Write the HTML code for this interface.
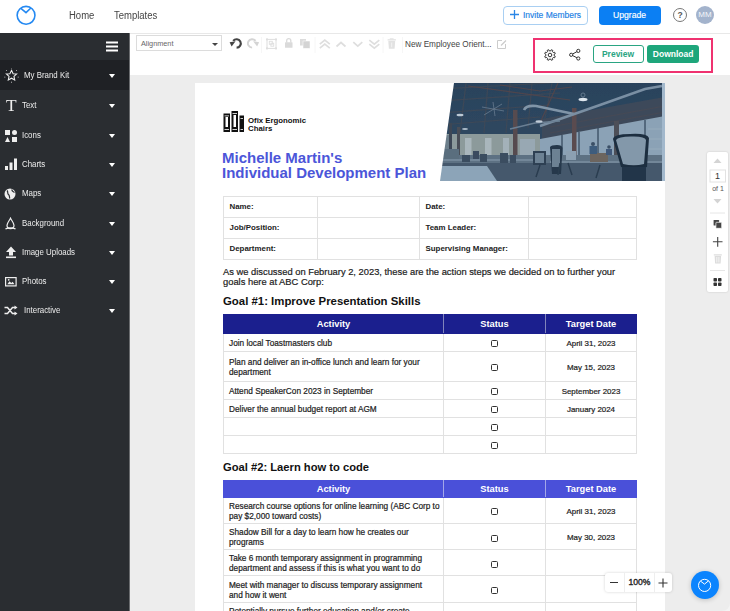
<!DOCTYPE html>
<html><head><meta charset="utf-8">
<style>
*{box-sizing:border-box}
html,body{margin:0;padding:0}
body{width:730px;height:611px;overflow:hidden;position:relative;background:#f4f4f4;font-family:"Liberation Sans",sans-serif;color:#222}
.a{position:absolute;white-space:nowrap}
#hdr{position:absolute;left:0;top:0;width:730px;height:33px;background:#fff}
#sb{position:absolute;left:0;top:33px;width:130px;height:578px;background:#2a2d31;border-right:1px solid #6a6c6f}
#tb{position:absolute;left:130px;top:33px;width:600px;height:42px;background:#fff;border-top:1px solid #e8e8e8}
#cv{position:absolute;left:130px;top:75px;width:600px;height:536px;background:#ededed;border-bottom-right-radius:8px}
#pg{position:absolute;left:195px;top:83px;width:470px;height:540px;background:#fff}
.sbi{position:absolute;left:0;width:129px;height:29px;color:#ededed;font-size:8.4px}
.sbi .t{position:absolute;left:22px;top:0;line-height:29px;transform:scaleX(.94);transform-origin:0 0}
.sbi .c{position:absolute;left:109px;top:13px;width:0;height:0;border-left:3.5px solid transparent;border-right:3.5px solid transparent;border-top:4px solid #fff}
.sbi svg{position:absolute}
table{border-collapse:collapse;table-layout:fixed;position:absolute;font-family:"Liberation Sans",sans-serif}
td,th{border:1px solid #e1e1e1;padding:0}
.it td{font-size:7.9px;font-weight:700;color:#222;height:21px;padding:0 0 1.5px 5.5px}
.gt th{color:#fff;font-size:9.3px;font-weight:700;height:19px;border-color:var(--hc);border-right-color:#8084bb}
.gt th:last-child{border-right-color:var(--hc)}
.g2 th{border-right-color:#a3a6e8}
.gt td{font-size:8.25px;color:#222;padding:2px 5px 0 5px;-webkit-text-stroke:0.2px #222;line-height:10px;white-space:nowrap}
.g2 td{padding-top:3.5px}
.gt td[align=center]{font-size:7.95px;-webkit-text-stroke:0.2px #222}
.cb{display:inline-block;width:7px;height:7px;border:1px solid #333;border-radius:1.5px;vertical-align:middle}
</style></head>
<body>
<!-- HEADER -->
<div id="hdr">
  <svg class="a" style="left:15px;top:5px" width="22" height="22" viewBox="0 0 22 22">
    <circle cx="11.05" cy="10.3" r="8.9" fill="none" stroke="#2489f2" stroke-width="1.6"/>
    <path d="M5.6 3.2L11 7.6L15.9 3.0" fill="none" stroke="#2489f2" stroke-width="1.6"/>
  </svg>
  <div class="a" style="left:69px;top:9.5px;font-size:10px;color:#444;line-height:12px;transform:scaleX(.95);transform-origin:0 0">Home</div>
  <div class="a" style="left:113.5px;top:9.5px;font-size:10px;color:#444;line-height:12px;transform:scaleX(.95);transform-origin:0 0">Templates</div>
  <div class="a" style="left:503px;top:6px;width:85px;height:19px;border:1px solid #a9cff2;border-radius:4px"></div>
  <svg class="a" style="left:509px;top:9px" width="11" height="11"><path d="M5.5 1V10M1 5.5H10" stroke="#2a86e6" stroke-width="1.3"/></svg>
  <div class="a" style="left:523px;top:9px;font-size:8.5px;color:#2280e4;line-height:12px;-webkit-text-stroke:0.15px #2280e4">Invite Members</div>
  <div class="a" style="left:599px;top:6px;width:62px;height:19px;background:#0b7ff3;border-radius:4px"></div>
  <div class="a" style="left:613px;top:9px;font-size:8.6px;color:#fff;line-height:12px;-webkit-text-stroke:0.15px #fff">Upgrade</div>
  <div class="a" style="left:673px;top:8.3px;width:14px;height:14px;border:1px solid #777;border-radius:50%;font-size:8.5px;font-weight:700;text-align:center;line-height:12px;color:#555">?</div>
  <div class="a" style="left:696px;top:6px;width:18px;height:18px;background:#a3b3cc;border-radius:50%;font-size:8px;text-align:center;line-height:18px;color:#f4f6fa">MM</div>
</div>

<!-- SIDEBAR -->
<div id="sb">
  <svg class="a" style="left:106px;top:8px" width="12" height="11"><rect x="0" y="0.5" width="12" height="2" fill="#fff"/><rect x="0" y="4.5" width="12" height="2" fill="#fff"/><rect x="0" y="8.5" width="12" height="2" fill="#fff"/></svg>
  <div class="sbi" style="top:27px;height:30px;background:#1f2125">
    <svg style="left:4px;top:8px" width="15" height="15" viewBox="0 0 14 14"><path d="M7 2.2 L8.5 5.3 L11.8 5.6 L9.3 7.9 L10 11.2 L7 9.5 L4 11.2 L4.7 7.9 L2.2 5.6 L5.5 5.3 Z" fill="none" stroke="#eee" stroke-width="1"/><circle cx="2.3" cy="2.3" r="0.5" fill="#bbb"/><circle cx="11.7" cy="2.3" r="0.5" fill="#bbb"/><circle cx="0.8" cy="8.5" r="0.5" fill="#bbb"/><circle cx="13.2" cy="8.5" r="0.5" fill="#bbb"/><circle cx="7" cy="13.2" r="0.5" fill="#bbb"/><circle cx="7" cy="0.6" r="0.4" fill="#bbb"/></svg>
    <div class="t" style="left:24px;line-height:30px">My Brand Kit</div><div class="c" style="top:14px"></div>
  </div>
  <div class="sbi" style="top:58px">
    <div class="a" style="left:5.5px;top:5.5px;font-family:'Liberation Serif';font-size:16.5px;color:#eee;line-height:17px;transform:scaleX(1.05);transform-origin:0 0">T</div>
    <div class="t">Text</div><div class="c"></div>
  </div>
  <div class="sbi" style="top:88px">
    <svg style="left:5px;top:9px" width="12" height="12"><rect x="0" y="0" width="5" height="5" fill="#eee"/><circle cx="9.5" cy="2.5" r="2.5" fill="#eee"/><path d="M0 12L2.5 7L5 12Z" fill="#eee"/><rect x="7" y="7" width="5" height="5" fill="#eee"/></svg>
    <div class="t">Icons</div><div class="c"></div>
  </div>
  <div class="sbi" style="top:117px">
    <svg style="left:5px;top:8px" width="12" height="12"><rect x="0" y="8" width="3" height="4" fill="#eee"/><rect x="4.5" y="4.5" width="3" height="7.5" fill="#eee"/><rect x="9" y="0.5" width="3" height="11.5" fill="#eee"/></svg>
    <div class="t">Charts</div><div class="c"></div>
  </div>
  <div class="sbi" style="top:146px">
    <svg style="left:4px;top:9px" width="12" height="12"><circle cx="6" cy="6" r="5.5" fill="#eee"/><path d="M3 2.5C4.5 4 3 5.5 4.5 6.5C6 7.5 5 9.5 6 10.5M8 1.5C7.5 3 9.5 4 10.5 4.5" stroke="#2a2d31" stroke-width="1.2" fill="none"/></svg>
    <div class="t">Maps</div><div class="c"></div>
  </div>
  <div class="sbi" style="top:176px">
    <svg style="left:4px;top:8px" width="13" height="14"><path d="M6.5 1.2C5.5 3.5 3 5.8 3 8.3A3.5 3.3 0 0 0 10 8.3C10 5.8 7.5 3.5 6.5 1.2Z" fill="none" stroke="#eee" stroke-width="1.2"/><path d="M1.5 11.8Q6.5 9.8 11.5 11.8" fill="none" stroke="#eee" stroke-width="1.3"/></svg>
    <div class="t">Background</div><div class="c"></div>
  </div>
  <div class="sbi" style="top:205px">
    <svg style="left:5px;top:8px" width="12" height="13"><path d="M6 0.5L11 6H8V9.5H4V6H1Z" fill="#eee"/><rect x="1" y="10.5" width="10" height="1.6" fill="#eee"/></svg>
    <div class="t">Image Uploads</div><div class="c"></div>
  </div>
  <div class="sbi" style="top:234px">
    <svg style="left:5px;top:10px" width="13" height="11"><rect x="0.6" y="0.6" width="10.5" height="8.3" fill="none" stroke="#eee" stroke-width="1.2"/><path d="M2.3 7.3L4.5 4.2L6.3 6L7.6 4.7L9.5 7.3Z" fill="#eee"/><circle cx="3.7" cy="2.8" r="0.9" fill="#eee"/></svg>
    <div class="t">Photos</div><div class="c"></div>
  </div>
  <div class="sbi" style="top:263px">
    <svg style="left:4px;top:9px" width="14" height="11"><path d="M0.5 2.5H3.5L8.5 8.5H11M0.5 8.5H3.5L8.5 2.5H11" stroke="#eee" stroke-width="1.5" fill="none"/><path d="M10.5 0.5L13.5 2.5L10.5 4.5ZM10.5 6.5L13.5 8.5L10.5 10.5Z" fill="#eee"/></svg>
    <div class="t" style="left:24px">Interactive</div><div class="c"></div>
  </div>
</div>

<!-- TOOLBAR -->
<div id="tb">
  <div class="a" style="left:5.5px;top:1px;width:86.5px;height:16px;border:1px solid #dcdcdc;background:#fff"></div>
  <div class="a" style="left:11px;top:5px;font-size:7.3px;color:#666;line-height:10px">Alignment</div>
  <div class="a" style="left:82px;top:9px;width:0;height:0;border-left:3px solid transparent;border-right:3px solid transparent;border-top:3.5px solid #444"></div>
  <svg class="a" style="left:0;top:0" width="400" height="22">
    <!-- undo -->
    <path d="M106.6 13.6A4.2 4.2 0 1 0 103.2 6.9" fill="none" stroke="#444" stroke-width="2.1"/>
    <path d="M99.6 8.3L105.6 7.2L101.6 12.4Z" fill="#444"/>
    <!-- redo -->
    <path d="M122.1 13.6A4.2 4.2 0 1 1 125.5 6.9" fill="none" stroke="#d4d4d4" stroke-width="1.9"/>
    <path d="M129.1 8.3L123.1 7.2L127.1 12.4Z" fill="#d4d4d4"/>
    <line x1="131.5" y1="3" x2="131.5" y2="19" stroke="#f6f6f6"/>
    <!-- group -->
    <rect x="137" y="5.4" width="9" height="9" fill="none" stroke="#dedede" stroke-width="1"/>
    <rect x="136" y="4.4" width="2" height="2" fill="#dedede"/><rect x="145" y="4.4" width="2" height="2" fill="#dedede"/>
    <rect x="136" y="13.4" width="2" height="2" fill="#dedede"/><rect x="145" y="13.4" width="2" height="2" fill="#dedede"/>
    <rect x="139.3" y="7.3" width="3" height="3" fill="none" stroke="#dedede" stroke-width="0.9"/>
    <rect x="140.9" y="9.2" width="2.8" height="3" fill="none" stroke="#dedede" stroke-width="0.9"/>
    <!-- lock -->
    <rect x="155" y="8.2" width="7.5" height="5.6" rx="0.5" fill="#dadada"/>
    <path d="M156.7 8.4V6.6A2.05 2.05 0 0 1 160.8 6.6V8.4" fill="none" stroke="#dadada" stroke-width="1.3"/>
    <!-- duplicate -->
    <rect x="170" y="5" width="6" height="6.5" fill="#dcdcdc"/>
    <rect x="173" y="7" width="7" height="7.4" fill="#d4d4d4" stroke="#fff" stroke-width="0.5"/>
    <line x1="185" y1="3" x2="185" y2="19" stroke="#f6f6f6"/>
    <!-- double up -->
    <path d="M189.8 10.2L194.8 6.2L199.8 10.2M189.8 14.2L194.8 10.2L199.8 14.2" fill="none" stroke="#dedede" stroke-width="1.7"/>
    <path d="M206.5 12.5L211 8.5L215.5 12.5" fill="none" stroke="#dedede" stroke-width="1.7"/>
    <path d="M223.3 8.2L227.8 12.2L232.3 8.2" fill="none" stroke="#dedede" stroke-width="1.7"/>
    <path d="M239.3 6.2L244.3 10.2L249.3 6.2M239.3 10.2L244.3 14.2L249.3 10.2" fill="none" stroke="#dedede" stroke-width="1.7"/>
    <line x1="253" y1="3" x2="253" y2="19" stroke="#f6f6f6"/>
    <path d="M258.3 7H265.2L264.6 14.8H258.9Z" fill="#e2e2e2"/>
    <rect x="257.6" y="5.2" width="8.3" height="1.3" fill="#e2e2e2"/>
    <rect x="259.8" y="4.3" width="3.8" height="1" fill="#e2e2e2"/>
    <line x1="261.7" y1="8.5" x2="261.7" y2="13.3" stroke="#f6f6f6" stroke-width="0.8"/>
    <line x1="272.5" y1="3" x2="272.5" y2="19" stroke="#f6f6f6"/>
  </svg>
  <div class="a" style="left:275px;top:5px;font-size:8.2px;color:#444;line-height:11px">New Employee Orient...</div>
  <svg class="a" style="left:366px;top:4px" width="12" height="12"><path d="M1.5 2.5H6M1.5 2.5V10.5H9.5V6" fill="none" stroke="#ccc" stroke-width="1"/><path d="M5 7.5L10 2.5" stroke="#ccc" stroke-width="1.3"/></svg>
  <!-- pink box -->
  <div class="a" style="left:403px;top:4px;width:180px;height:35px;border:2px solid #ef3270"></div>
  <svg class="a" style="left:413px;top:14px" width="14" height="14" viewBox="0 0 14 14">
    <path d="M12.25 8.26 L11.60 9.82 L10.28 9.46 L9.46 10.28 L9.82 11.60 L8.26 12.25 L7.58 11.06 L6.42 11.06 L5.74 12.25 L4.18 11.60 L4.54 10.28 L3.72 9.46 L2.40 9.82 L1.75 8.26 L2.94 7.58 L2.94 6.42 L1.75 5.74 L2.40 4.18 L3.72 4.54 L4.54 3.72 L4.18 2.40 L5.74 1.75 L6.42 2.94 L7.58 2.94 L8.26 1.75 L9.82 2.40 L9.46 3.72 L10.28 4.54 L11.60 4.18 L12.25 5.74 L11.06 6.42 L11.06 7.58Z" fill="none" stroke="#333" stroke-width="1" stroke-linejoin="round"/>
    <circle cx="7" cy="7" r="1.8" fill="none" stroke="#333" stroke-width="1"/>
  </svg>
  <svg class="a" style="left:438px;top:14px" width="14" height="14" viewBox="0 0 14 14">
    <circle cx="3.2" cy="6.8" r="1.6" fill="none" stroke="#333" stroke-width="1"/>
    <circle cx="10.3" cy="2.9" r="1.6" fill="none" stroke="#333" stroke-width="1"/>
    <circle cx="10.3" cy="10.5" r="1.6" fill="none" stroke="#333" stroke-width="1"/>
    <path d="M4.6 6L8.9 3.7M4.6 7.6L8.9 9.7" stroke="#333" stroke-width="1"/>
  </svg>
  <div class="a" style="left:462.5px;top:11.2px;width:51px;height:18.3px;border:1px solid #2aa582;border-radius:3px;font-size:8.5px;font-weight:700;color:#2aa582;text-align:center;line-height:16px">Preview</div>
  <div class="a" style="left:517.3px;top:11.2px;width:51.7px;height:18.3px;background:#1ea67b;border-radius:3px;font-size:8.5px;font-weight:700;color:#fff;text-align:center;line-height:18.3px">Download</div>
</div>

<!-- CANVAS -->
<div id="cv"></div>
<div id="pg">
  <!-- photo -->
  <svg class="a" style="left:245px;top:0" width="225" height="98" viewBox="0 0 225 98">
    <defs>
      <clipPath id="cp"><path d="M14 0H225V98H0Z"/></clipPath>
      <filter id="bl" x="-5%" y="-5%" width="110%" height="110%"><feGaussianBlur stdDeviation="0.75"/></filter>
      <linearGradient id="ceil" x1="0" y1="0" x2="0" y2="1">
        <stop offset="0" stop-color="#2a435c"/><stop offset="1" stop-color="#324a63"/>
      </linearGradient>
    </defs>
    <g clip-path="url(#cp)"><g filter="url(#bl)">
      <rect x="0" y="0" width="225" height="98" fill="url(#ceil)"/>
      <!-- rafters -->
      <path d="M0 6L110 0M0 18L120 10M0 30L110 22M0 42L100 34M26 0L20 50M48 0L44 50M70 0L66 50M92 0L88 45M112 0L104 40" stroke="#414856" stroke-width="1.2" fill="none" opacity="0.8"/>
      <path d="M28 3L130 17M60 2L100 8L132 4M118 0L100 40" stroke="#5b4548" stroke-width="1.2" fill="none" opacity="0.75"/>
      <!-- wooden band right -->
      <path d="M102 36L225 14V34L102 56Z" fill="#3e4a5a"/>
      <path d="M110 44L225 23M110 50L225 29" stroke="#4a4a55" stroke-width="1" opacity="0.7"/>
      <!-- back wall left -->
      <path d="M0 51H100V76H0Z" fill="#8c9a9b"/>
      <rect x="25" y="55" width="6.5" height="17" fill="#a9b6bc"/>
      <rect x="45" y="55" width="6.5" height="17" fill="#a9b6bc"/>
      <rect x="63" y="55" width="6" height="17" fill="#a3b1b9"/>
      <rect x="80" y="56" width="15" height="16" fill="#98a8b3"/>
      <rect x="0" y="52" width="10" height="22" fill="#6d7f8b"/>
      <!-- right windows -->
      <path d="M100 56L225 33V76H100Z" fill="#8ba2b6"/>
      <path d="M122 52V76M139 49V76M158 45V76M177 42V76M205 37V76" stroke="#3d5266" stroke-width="1.4"/>
      <path d="M208 46H225M206 56H225M206 66H225M180 60H203" stroke="#a3b5c5" stroke-width="0.6"/>
      <!-- pillars -->
      <rect x="9" y="40" width="3" height="36" fill="#3d4754"/>
      <rect x="17" y="44" width="3" height="32" fill="#4a4e57"/>
      <rect x="73" y="27" width="4.5" height="52" fill="#574b50"/>
      <rect x="132" y="25" width="4.5" height="54" fill="#5a4c50"/>
      <rect x="174" y="38" width="5" height="40" fill="#4d5058"/>
      <!-- ducts -->
      <path d="M84 27Q86 22 96 23L134 31" stroke="#8095a8" stroke-width="2.6" fill="none"/>
      <path d="M100 43L160 22L205 6L222 3" stroke="#7a8fa3" stroke-width="2.6" fill="none"/>
      <path d="M70 46L95 40L120 38" stroke="#6a7f93" stroke-width="1.6" fill="none"/>
      <ellipse cx="20" cy="32" rx="3.5" ry="1.3" fill="#bccad6"/>
      <ellipse cx="25" cy="46" rx="3" ry="1.1" fill="#aebdca"/>
      <ellipse cx="99" cy="38.5" rx="3.5" ry="1.2" fill="#c0ccd8"/>
      <ellipse cx="143" cy="16.5" rx="4.5" ry="1.7" fill="#dde6ee"/>
      <circle cx="143" cy="12" r="2" fill="none" stroke="#6f8498" stroke-width="0.8"/>
      <path d="M42 24L64 28M53 19L55 33M44 32L62 21" stroke="#6e8396" stroke-width="0.7"/>
      <!-- desks -->
      <rect x="0" y="72" width="225" height="8" fill="#5d7183"/>
      <path d="M0 77H100M110 79H225" stroke="#8a9eaf" stroke-width="1.2"/>
      <rect x="0" y="80" width="225" height="18" fill="#45596c"/>
      <!-- monitors / chairs -->
      <rect x="3" y="66" width="16" height="10" fill="#5a6e7e"/>
      <rect x="33" y="68" width="6" height="8" fill="#3a4c5f"/>
      <path d="M93 68H106V82H93Z" fill="#2d3f52"/>
      <path d="M95 70H104V80H95Z" fill="#6d8294"/>
      <path d="M110 64Q111 62 117 62Q122 62 122.5 65L121 91H112Z" fill="#25384b"/>
      <path d="M112 66H120V84H112Z" fill="#6c8193"/>
      <rect x="126" y="68" width="10" height="9" fill="#8ca0b2"/>
      <rect x="150" y="70" width="18" height="9" fill="#6c655e"/>
      <circle cx="153" cy="61" r="2" fill="#3a4f66"/>
      <rect x="149.5" y="63" width="7.5" height="8" fill="#3e5b7d"/>
      <circle cx="169" cy="64" r="1.8" fill="#3a4f66"/>
      <rect x="166" y="66" width="6" height="6" fill="#40597a"/>
      <path d="M60 70h8v10h-8zM70 72h6v8h-6zM40 71h7v8h-7zM22 72h8v7h-8z" fill="#3a4d60"/>
      <path d="M128 80L132 92M120 80L118 92M160 82L156 95M100 82L96 94" stroke="#2b3d50" stroke-width="1.5"/>
      <!-- table top -->
      <path d="M0 83H47L57 98H0Z" fill="#8ca4b8"/>
      <!-- chair -->
      <path d="M173 56Q174 51 190 51Q207 50 209 55L207 84Q195 87 181 84Z" fill="#1d2e40"/>
      <path d="M176 57Q178 53.5 191 53.5Q205 53 206 57L204 81Q194 83.5 183 81Z" fill="#8398aa"/>
      <path d="M182 84H206V98H182Z" fill="#24364a"/>
    </g><rect x="222" y="0" width="3" height="98" fill="#a2b8cc"/>
    </g>
  </svg>
  <!-- logo -->
  <svg class="a" style="left:28px;top:28px" width="24" height="22" viewBox="0 0 24 22">
    <rect x="0.5" y="2.5" width="6.5" height="18.5" fill="#111"/>
    <rect x="2.5" y="6" width="2.5" height="10" fill="#fff"/>
    <rect x="1.5" y="4.5" width="4.5" height="0.8" fill="#fff"/>
    <rect x="1.5" y="18" width="4.5" height="0.8" fill="#fff"/>
    <rect x="8.5" y="0" width="6.5" height="21" fill="#111"/>
    <rect x="10.5" y="4" width="2.5" height="12" fill="#fff"/>
    <rect x="9.5" y="2" width="4.5" height="0.8" fill="#fff"/>
    <rect x="9.5" y="18" width="4.5" height="0.8" fill="#fff"/>
    <rect x="16.5" y="4.5" width="4.5" height="16.5" fill="#111"/>
    <rect x="17.5" y="7" width="2.5" height="0.8" fill="#fff"/>
    <rect x="17.5" y="18" width="2.5" height="0.8" fill="#fff"/>
  </svg>
  <div class="a" style="left:53px;top:34px;font-size:7.8px;font-weight:700;line-height:8px;color:#111">Ofix Ergonomic<br>Chairs</div>
  <div class="a" style="left:27px;top:67px;font-size:15px;font-weight:700;line-height:15px;color:#4b56d9">Michelle Martin's<br>Individual Development Plan</div>

  <table class="it" style="left:28px;top:113px;width:414px">
    <tr><td style="width:94px">Name:</td><td style="width:102px"></td><td style="width:109px">Date:</td><td></td></tr>
    <tr><td>Job/Position:</td><td></td><td>Team Leader:</td><td></td></tr>
    <tr><td>Department:</td><td></td><td>Supervising Manager:</td><td></td></tr>
  </table>

  <div class="a" style="left:28px;top:184px;font-size:9.35px;line-height:10.4px;color:#222;-webkit-text-stroke:0.2px #222">As we discussed on February 2, 2023, these are the action steps we decided on to further your<br>goals here at ABC Corp:</div>
  <div class="a" style="left:28px;top:211.7px;font-size:11.4px;font-weight:700;color:#111;line-height:13px">Goal #1: Improve Presentation Skills</div>

  <table class="gt" style="left:28px;top:231px;width:414px;--hc:#1b1f8e">
    <tr style="background:#1b1f8e"><th style="width:220px">Activity</th><th style="width:102px">Status</th><th>Target Date</th></tr>
    <tr style="height:18px"><td>Join local Toastmasters club</td><td align="center"><span class="cb"></span></td><td align="center">April 31, 2023</td></tr>
    <tr style="height:30px"><td>Plan and deliver an in-office lunch and learn for your<br>department</td><td align="center"><span class="cb"></span></td><td align="center">May 15, 2023</td></tr>
    <tr style="height:18px"><td>Attend SpeakerCon 2023 in September</td><td align="center"><span class="cb"></span></td><td align="center">September 2023</td></tr>
    <tr style="height:18px"><td>Deliver the annual budget report at AGM</td><td align="center"><span class="cb"></span></td><td align="center">January 2024</td></tr>
    <tr style="height:18px"><td></td><td align="center"><span class="cb"></span></td><td></td></tr>
    <tr style="height:18px"><td></td><td align="center"><span class="cb"></span></td><td></td></tr>
  </table>

  <div class="a" style="left:28px;top:378px;font-size:11.2px;font-weight:700;color:#111;line-height:13px">Goal #2: Laern how to code</div>

  <table class="gt g2" style="left:28px;top:397px;width:414px;--hc:#4a50d9">
    <tr style="background:#4a50d9"><th style="width:220px;height:16.5px">Activity</th><th style="width:102px;height:16.5px">Status</th><th style="height:16.5px">Target Date</th></tr>
    <tr style="height:26.3px"><td>Research course options for online learning (ABC Corp to<br>pay $2,000 toward costs)</td><td align="center"><span class="cb"></span></td><td align="center">April 31, 2023</td></tr>
    <tr style="height:26.3px"><td>Shadow Bill for a day to learn how he creates our<br>programs</td><td align="center"><span class="cb"></span></td><td align="center">May 30, 2023</td></tr>
    <tr style="height:26.3px"><td>Take 6 month temporary assignment in programming<br>department and assess if this is what you want to do</td><td align="center"><span class="cb"></span></td><td></td></tr>
    <tr style="height:26.3px"><td>Meet with manager to discuss temporary assignment<br>and how it went</td><td align="center"><span class="cb"></span></td><td></td></tr>
    <tr style="height:26.3px"><td>Potentially pursue further education and/or create<br>x</td><td align="center"><span class="cb"></span></td><td></td></tr>
  </table>
</div>

<!-- page nav -->
<div class="a" style="left:707px;top:152px;width:21px;height:140px;background:#fff;border-radius:2px;box-shadow:0 0 2px rgba(0,0,0,0.18)"></div>
<svg class="a" style="left:707px;top:152px" width="21" height="140" viewBox="0 0 21 140">
  <path d="M6.5 11L10.5 6.5L14.5 11Z" fill="#d4d4d4"/>
  <rect x="3" y="18" width="15.5" height="12" fill="#fff" stroke="#e2e2e2" stroke-width="1"/>
  <path d="M6.5 47L10.5 51.5L14.5 47Z" fill="#d4d4d4"/>
  <line x1="3" y1="61" x2="18" y2="61" stroke="#e6e6e6"/>
  <rect x="6.6" y="68" width="5.5" height="5.5" rx="0.6" fill="#444"/>
  <rect x="8.9" y="70.3" width="5.8" height="6" rx="0.6" fill="#444" stroke="#fff" stroke-width="0.7"/>
  <path d="M10.7 85V94.7M5.9 89.8H15.5" stroke="#444" stroke-width="1.1"/>
  <path d="M7.6 104H14.1L13.6 111.5H8.1Z" fill="#dcdcdc"/>
  <rect x="6.8" y="102.3" width="8" height="1.2" fill="#dcdcdc"/>
  <path d="M9.8 105V110.5M11.9 105V110.5" stroke="#fff" stroke-width="0.7"/>
  <line x1="3" y1="118.5" x2="18" y2="118.5" stroke="#e6e6e6"/>
  <rect x="6.5" y="126" width="3.5" height="3.5" rx="0.8" fill="#333"/>
  <rect x="11" y="126" width="3.5" height="3.5" rx="0.8" fill="#333"/>
  <rect x="6.5" y="130.5" width="3.5" height="3.5" rx="0.8" fill="#333"/>
  <rect x="11" y="130.5" width="3.5" height="3.5" rx="0.8" fill="#333"/>
</svg>
<div class="a" style="left:707px;top:171px;width:21px;text-align:center;font-size:9px;color:#333;line-height:11px">1</div>
<div class="a" style="left:707.5px;top:183.5px;width:21px;text-align:center;font-size:7px;color:#555;line-height:9px">of 1</div>

<!-- zoom ctl -->
<div class="a" style="left:605px;top:573px;width:67px;height:19px;background:#fff;border-radius:3px;box-shadow:0 0 3px rgba(0,0,0,0.18)"></div>
<div class="a" style="left:623.5px;top:573px;width:1px;height:19px;background:#eee"></div>
<div class="a" style="left:654px;top:573px;width:1px;height:19px;background:#eee"></div>
<div class="a" style="left:610px;top:582px;width:8px;height:1.2px;background:#333"></div>
<div class="a" style="left:628.5px;top:577px;font-size:8.6px;color:#222;line-height:11px;-webkit-text-stroke:0.35px #222">100%</div>
<svg class="a" style="left:658px;top:578px" width="10" height="10"><path d="M5 0.5V9.5M0.5 5H9.5" stroke="#333" stroke-width="1.1"/></svg>

<!-- chat -->
<div class="a" style="left:690.5px;top:571px;width:28px;height:28px;background:#0b84fe;border-radius:50%;box-shadow:0 1px 5px rgba(0,0,0,0.2)"></div>
<svg class="a" style="left:697px;top:578px" width="15" height="15"><circle cx="7.6" cy="7.4" r="6.1" fill="none" stroke="#fff" stroke-width="1"/><path d="M3.6 3.2L7.5 6.1L11.4 2.9" fill="none" stroke="#fff" stroke-width="1"/></svg>
</body></html>
